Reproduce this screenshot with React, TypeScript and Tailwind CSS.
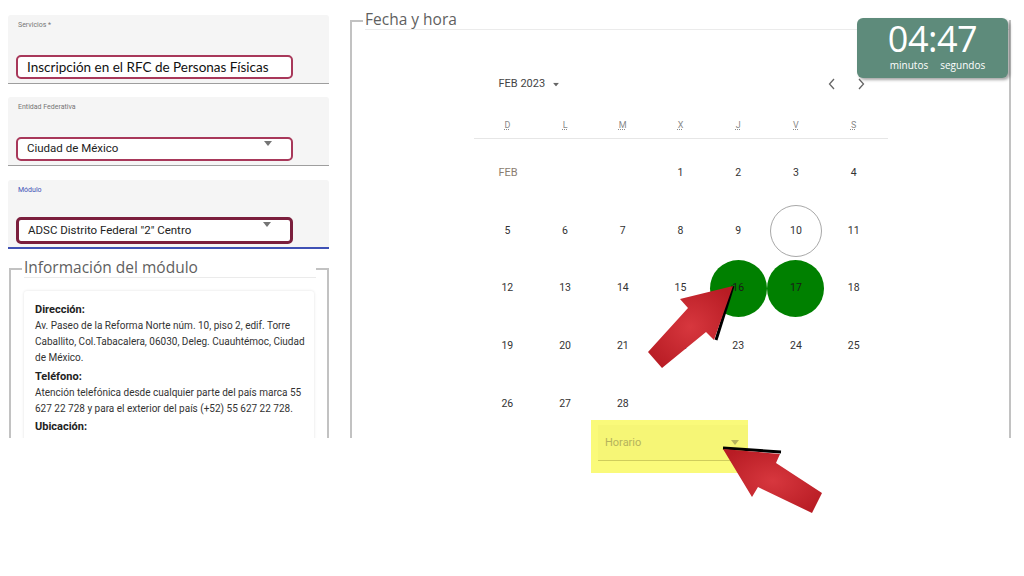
import React from 'react';

const weekDays = ['D', 'L', 'M', 'X', 'J', 'V', 'S'];

// calendar rows for FEB 2023 (null = empty cell)
const weeks: (number | null)[][] = [
  [null, null, null, 1, 2, 3, 4],
  [5, 6, 7, 8, 9, 10, 11],
  [12, 13, 14, 15, 16, 17, 18],
  [19, 20, 21, 22, 23, 24, 25],
  [26, 27, 28, null, null, null, null],
];

const available = [16, 17];
const today = 10;

const Caret = ({ className = '' }: { className?: string }) => (
  <svg width="8" height="5" viewBox="0 0 8 5" className={className}>
    <path d="M0 0h8L4 5z" fill="currentColor" />
  </svg>
);

const Field: React.FC<{
  label: string;
  value: string;
  active?: boolean;
  big?: boolean;
}> = ({ label, value, active, big }) => (
  <div
    className={`shrink-0 bg-[#f5f5f5] rounded-t-[3px] h-[69px] ${active ? 'border-b-2 border-[#3f51b5]' : 'border-b border-[#9e9e9e]'}`}
  >
    <div
      className={`pl-[10px] pt-[6px] text-[7px] leading-[9px] ${active ? 'text-[#3f51b5]' : 'text-[#757575]'}`}
    >
      {label}
    </div>
    <div
      className={`relative mx-[8px] w-[277px] bg-white rounded-[5px] flex items-center pl-[9px] whitespace-nowrap ${
        active
          ? 'mt-[22px] h-[27px] border-[3px] border-[#7b1f3d]'
          : 'mt-[25px] h-[24px] border-2 border-[#a8385a]'
      }`}
    >
      <span
        className={
          big
            ? "font-['Lato',sans-serif] text-[13.5px] text-[#111]"
            : "font-['Roboto',sans-serif] text-[11.5px] text-[#222]"
        }
      >
        {value}
      </span>
      {!big && <Caret className="absolute right-[19px] top-[2px] text-[#757575]" />}
    </div>
  </div>
);

const Legend: React.FC<{ title: string; cornerRight?: boolean }> = ({ title, cornerRight }) => (
  <div className="flex h-[20px] shrink-0">
    <div className="w-[13px] mt-[10px] border-t-2 border-l-2 border-[#c2c2c2]" />
    <div className="flex-1 ml-[2px] border-b border-[#ebebeb] font-['Open_Sans',sans-serif] text-[15.5px] leading-[19px] text-[#5f5f5f]">
      {title}
    </div>
    {cornerRight ? (
      <div className="w-[13px] mt-[10px] border-t-2 border-r-2 border-[#c2c2c2]" />
    ) : (
      <div className="w-[2px] mt-[10px] bg-[#c2c2c2]" />
    )}
  </div>
);

export default function App() {
  return (
    <div className="relative w-[1024px] h-[576px] bg-white overflow-hidden font-['Roboto',sans-serif]">
      <div className="h-[438px] overflow-hidden flex">
        {/* Left column */}
        <div className="ml-[8px] w-[321px] pt-[15px] flex flex-col">
          <Field label="Servicios *" value="Inscripción en el RFC de Personas Físicas" big />
          <div className="h-[13px] shrink-0" />
          <Field label="Entidad Federativa" value="Ciudad de México" />
          <div className="h-[14px] shrink-0" />
          <Field label="Módulo" value={'ADSC Distrito Federal "2" Centro'} active />

          <div className="mt-[9px] pl-[1px] shrink-0">
            <Legend title="Información del módulo" cornerRight />
            <div className="border-x-2 border-[#c2c2c2] px-[13px] pt-[13px] h-[200px]">
              <div className="bg-white rounded-[3px] shadow-[0_0_3px_rgba(0,0,0,0.12)] px-[11px] pt-[11px] text-[10px] leading-[16px] text-[#333] h-[200px]">
                <div className="font-bold text-[#222] text-[11px]">Dirección:</div>
                <div className="whitespace-nowrap">Av. Paseo de la Reforma Norte núm. 10, piso 2, edif. Torre</div>
                <div className="whitespace-nowrap">Caballito, Col.Tabacalera, 06030, Deleg. Cuauhtémoc, Ciudad</div>
                <div>de México.</div>
                <div className="font-bold text-[#222] text-[11px] mt-[3px]">Teléfono:</div>
                <div className="whitespace-nowrap">Atención telefónica desde cualquier parte del país marca 55</div>
                <div className="whitespace-nowrap">627 22 728 y para el exterior del país (+52) 55 627 22 728.</div>
                <div className="font-bold text-[#222] text-[11px] mt-[2px]">Ubicación:</div>
                <div className="text-[#c9a27a]">Mostrar mapa</div>
              </div>
            </div>
          </div>
        </div>

        {/* Right column: Fecha y hora */}
        <div className="ml-[21px] w-[661px] pt-[10px] flex flex-col">
          <Legend title="Fecha y hora" />
          <div className="flex-1 border-x-2 border-[#c2c2c2]">
            <div className="w-[414px] mx-auto mt-[34px]">
              <div className="h-[40px] flex items-center justify-between pl-[25px] pr-[22px]">
                <div className="flex items-center gap-[7px] text-[11px] text-[#444]">
                  <span>FEB 2023</span>
                  <Caret className="text-[#666] scale-75" />
                </div>
                <div className="flex items-center gap-[19px] text-[#666]">
                  <svg width="10" height="12" viewBox="0 0 10 12">
                    <path d="M7 1 2.5 6 7 11" fill="none" stroke="currentColor" strokeWidth="1.3" />
                  </svg>
                  <svg width="10" height="12" viewBox="0 0 10 12">
                    <path d="M3 1 7.5 6 3 11" fill="none" stroke="currentColor" strokeWidth="1.3" />
                  </svg>
                </div>
              </div>
              <div className="mt-[9px] h-[26px] border-b border-[#e6e6e6] grid grid-cols-7 px-[5px] items-center">
                {weekDays.map(d => (
                  <div key={d} className="text-center text-[9px] text-[#8a8a8a]">
                    <span className="underline decoration-dotted">{d}</span>
                  </div>
                ))}
              </div>
              <div className="pt-[5px] px-[5px]">
                {weeks.map((week, wi) => (
                  <div key={wi} className="grid grid-cols-7 h-[57.7px]">
                    {week.map((day, di) => {
                      if (day === null) {
                        return (
                          <div key={di} className="flex items-center pl-[20px] text-[11px] text-[#8a7d70]">
                            {wi === 0 && di === 0 ? 'FEB' : ''}
                          </div>
                        );
                      }
                      const isAvail = available.includes(day);
                      const isToday = day === today;
                      return (
                        <div key={di} className="flex items-center justify-center">
                          <div
                            className={`flex items-center justify-center rounded-full text-[10.5px] ${
                              isAvail
                                ? 'w-[57px] h-[57px] bg-[#008000] text-[#1a1a1a]'
                                : isToday
                                ? 'w-[52px] h-[52px] border border-[#a8a8a8] text-[#333]'
                                : 'w-[52px] h-[52px] text-[#333]'
                            }`}
                          >
                            {day}
                          </div>
                        </div>
                      );
                    })}
                  </div>
                ))}
              </div>
            </div>
          </div>
        </div>
      </div>

      {/* Timer */}
      <div className="absolute left-[857px] top-[18px] w-[151px] h-[60px] rounded-[6px] bg-[#5e8b7b] shadow-[2px_2px_3px_rgba(0,0,0,0.35)] flex flex-col items-center text-white font-['Open_Sans',sans-serif]">
        <div className="text-[36px] leading-[34px] mt-[4px] tracking-[-0.5px]">04:47</div>
        <div className="flex gap-[12px] text-[10px] leading-[12px] mt-[3px] ml-[10px]">
          <span>minutos</span>
          <span>segundos</span>
        </div>
      </div>

      {/* Horario highlighted */}
      <div className="absolute left-[591px] top-[420px] w-[157px] h-[53px] bg-[#fafa7a]">
        <div className="ml-[7px] mt-[5px] h-[36px] border-b border-[#cfcd5c] bg-[#f6f676] relative">
          <span className="absolute left-[7px] top-[10px] text-[11px] text-[#b5b35c]">Horario</span>
          <Caret className="absolute right-[9px] top-[15px] text-[#b5b35c]" />
        </div>
      </div>

      {/* Annotation arrows */}
      <svg className="absolute left-0 top-0 pointer-events-none" width="1024" height="576" viewBox="0 0 1024 576">
        <defs>
          <radialGradient id="redg" cx="0.5" cy="0.5" r="0.6">
            <stop offset="0" stopColor="#d7373e" />
            <stop offset="1" stopColor="#b81c24" />
          </radialGradient>
        </defs>
        <path d="M733 286 L716 340" stroke="#000" strokeWidth="3" />
        <polygon points="733,286 714,340 706,332 662,368 648,352 688,308 680,299" fill="url(#redg)" />
        <path d="M723 448 L781 452" stroke="#000" strokeWidth="3" />
        <polygon points="723,449 780,454 776,463 822,493 812,513 758,487 752,497" fill="url(#redg)" />
      </svg>
    </div>
  );
}
